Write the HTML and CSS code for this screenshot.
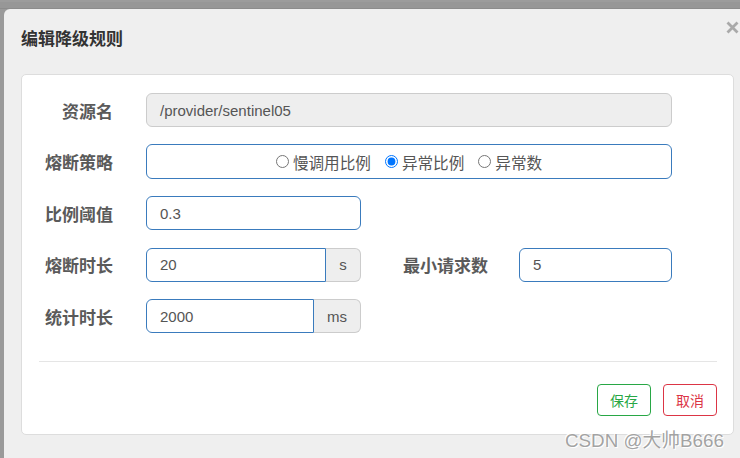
FILE: index.html
```html
<!DOCTYPE html>
<html lang="zh-CN">
<head>
<meta charset="utf-8">
<title>编辑降级规则</title>
<link rel="stylesheet" href="styles.css">
</head>
<body>
<div class="topbar"></div>
<div class="modal">
  <div class="modal-header">
    <div class="modal-title">编辑降级规则</div>
    <svg class="close" width="13" height="13" viewBox="0 0 13 13" aria-label="关闭">
      <path d="M1.5 1.5 L11.5 11.5 M11.5 1.5 L1.5 11.5" stroke="#a9a9a9" stroke-width="2.8" stroke-linecap="butt" fill="none"/>
    </svg>
  </div>
  <div class="card">
    <div class="form">
      <div class="row">
        <div class="label">资源名</div>
        <div class="field disabled w-full">/provider/sentinel05</div>
      </div>
      <div class="row">
        <div class="label">熔断策略</div>
        <div class="field w-full radios">
          <label class="radio"><input type="radio" name="grade"><span>慢调用比例</span></label>
          <label class="radio"><input type="radio" name="grade" checked><span>异常比例</span></label>
          <label class="radio"><input type="radio" name="grade"><span>异常数</span></label>
        </div>
      </div>
      <div class="row">
        <div class="label">比例阈值</div>
        <div class="field w-half">0.3</div>
      </div>
      <div class="row">
        <div class="label">熔断时长</div>
        <div class="group">
          <div class="field joined w-s">20</div>
          <div class="addon w-addon-s">s</div>
        </div>
        <div class="label label-mid">最小请求数</div>
        <div class="field w-min">5</div>
      </div>
      <div class="row">
        <div class="label">统计时长</div>
        <div class="group">
          <div class="field joined w-ms">2000</div>
          <div class="addon w-addon-ms">ms</div>
        </div>
      </div>
    </div>
    <div class="divider"></div>
    <div class="footer">
      <button class="btn btn-save">保存</button>
      <button class="btn btn-cancel">取消</button>
    </div>
  </div>
</div>
<div class="watermark">CSDN @大帅B666</div>
</body>
</html>
```

FILE: styles.css
```css
html, body {
  margin: 0;
  padding: 0;
}
body {
  width: 740px;
  height: 458px;
  overflow: hidden;
  background: #9a9a9a;
  font-family: "Liberation Sans", "Noto Sans CJK SC", sans-serif;
  position: relative;
}
.topbar {
  height: 9px;
  box-sizing: border-box;
  border-top: 2px solid #9c9c9c;
  border-bottom: 1px solid #8c8c8c;
  background: #979797;
}
.modal {
  margin-left: 4px;
  width: 736px;
  height: 449px;
  box-sizing: border-box;
  padding: 0 6px 0 17px;
  background: #efefef;
  border-top-left-radius: 6px;
}
.modal-header {
  display: flex;
  justify-content: space-between;
  align-items: flex-start;
  padding-top: 21px;
  height: 44px;
  box-sizing: content-box;
}
.modal-title {
  font-size: 17px;
  line-height: 20px;
  font-weight: bold;
  color: #333;
}
.close {
  flex: none;
  margin-top: -9px;
  margin-right: -5px;
}
.card {
  width: 713px;
  height: 361px;
  box-sizing: border-box;
  background: #fff;
  border: 1px solid #ddd;
  border-radius: 5px;
}
.form {
  padding-top: 18px;
}
.row {
  display: flex;
  align-items: center;
  height: 34px;
  margin-bottom: 17.5px;
}
.row:last-child {
  margin-bottom: 0;
}
.label {
  flex: none;
  width: 91px;
  margin-right: 33px;
  text-align: right;
  font-size: 17px;
  font-weight: bold;
  color: #5a5a5a;
}
.label-mid {
  width: 127px;
  margin-right: 31px;
}
.field {
  flex: none;
  height: 34px;
  box-sizing: border-box;
  display: flex;
  align-items: center;
  padding: 0 13px;
  border: 1px solid #3a7bbd;
  border-radius: 6px;
  font-size: 15px;
  color: #555;
  background: #fff;
}
.field.disabled {
  background: #eee;
  border-color: #ccc;
}
.w-full { width: 526px; }
.w-half { width: 215px; }
.w-min { width: 153px; }
.w-s { width: 180px; }
.w-ms { width: 168px; }
.radios {
  justify-content: center;
  height: 35px;
  gap: 14px;
}
.radio {
  display: flex;
  align-items: center;
  gap: 4px;
  font-size: 15.6px;
  color: #555;
}
.radio input {
  margin: 0;
  width: 13px;
  height: 13px;
}
.group {
  display: flex;
  flex: none;
}
.field.joined {
  border-top-right-radius: 0;
  border-bottom-right-radius: 0;
}
.addon {
  height: 34px;
  box-sizing: border-box;
  display: flex;
  align-items: center;
  justify-content: center;
  background: #eee;
  border: 1px solid #ccc;
  border-left: none;
  border-radius: 0 6px 6px 0;
  font-size: 15px;
  color: #555;
}
.w-addon-s { width: 35px; }
.w-addon-ms { width: 47px; }
.divider {
  margin: 28px 16px 0 17px;
  border-top: 1px solid #e5e5e5;
}
.footer {
  display: flex;
  justify-content: flex-end;
  gap: 12px;
  padding: 22px 16px 0 0;
}
.btn {
  width: 54px;
  height: 32px;
  box-sizing: border-box;
  background: #fff;
  border: 1px solid;
  border-radius: 4px;
  font-family: "Liberation Sans", "Noto Sans CJK SC", sans-serif;
  font-size: 14px;
  padding: 0;
}
.btn-save {
  color: #28a745;
  border-color: #28a745;
}
.btn-cancel {
  color: #dc3545;
  border-color: #dc3545;
}
.watermark {
  position: absolute;
  left: 565px;
  top: 431px;
  font-size: 18.8px;
  line-height: 19px;
  color: #a3a3a3;
  text-shadow: 0 0 1px #fff, 1px 1px 0 #fff, -1px -1px 0 #fff;
  white-space: nowrap;
}
```
